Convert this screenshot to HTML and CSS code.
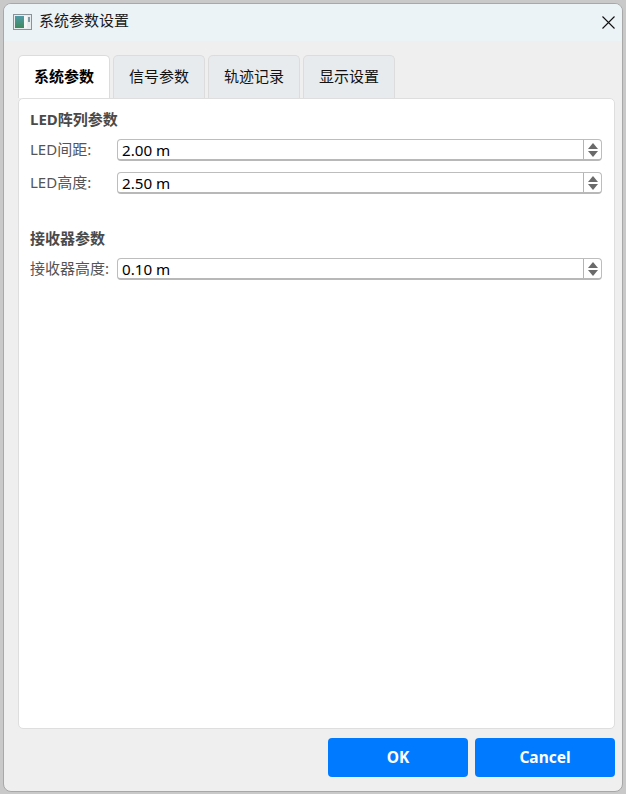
FILE: index.html
```html
<!DOCTYPE html>
<html lang="zh">
<head>
<meta charset="utf-8">
<title>系统参数设置</title>
<link rel="stylesheet" href="styles.css">
</head>
<body>
<div class="window">
  <header class="titlebar">
    <svg class="app-icon" width="19" height="16" viewBox="0 0 19 16">
      <defs><linearGradient id="g" x1="0" y1="0" x2="0" y2="1"><stop offset="0" stop-color="#4f9aa8"/><stop offset="1" stop-color="#3f8a5a"/></linearGradient></defs>
      <rect x="0.5" y="0.5" width="18" height="15" fill="#e8eef0" stroke="#8a9498"/>
      <rect x="2" y="2" width="9" height="12" fill="url(#g)"/>
      <rect x="11" y="2" width="3" height="12" fill="#f6f8f8"/>
      <rect x="15" y="3" width="2" height="5" fill="#7f9aa2"/>
    </svg>
    <span class="title">系统参数设置</span>
    <svg class="close" width="13" height="13" viewBox="0 0 13 13"><path d="M0.5 0.5L12.5 12.5M12.5 0.5L0.5 12.5" stroke="#111" stroke-width="1.1" fill="none"/></svg>
  </header>
  <div class="content">
    <nav class="tabs">
      <div class="tab active">系统参数</div>
      <div class="tab">信号参数</div>
      <div class="tab">轨迹记录</div>
      <div class="tab">显示设置</div>
    </nav>
    <section class="pane">
      <h2 class="group first">LED阵列参数</h2>
      <div class="row">
        <label class="label">LED间距:</label>
        <div class="spin"><span class="value">2.00 m</span><span class="arrows"><i class="up"></i><i class="down"></i></span></div>
      </div>
      <div class="row">
        <label class="label">LED高度:</label>
        <div class="spin"><span class="value">2.50 m</span><span class="arrows"><i class="up"></i><i class="down"></i></span></div>
      </div>
      <h2 class="group second">接收器参数</h2>
      <div class="row">
        <label class="label">接收器高度:</label>
        <div class="spin"><span class="value">0.10 m</span><span class="arrows"><i class="up"></i><i class="down"></i></span></div>
      </div>
    </section>
    <footer class="buttons">
      <button class="btn">OK</button>
      <button class="btn">Cancel</button>
    </footer>
  </div>
</div>
</body>
</html>
```
FILE: styles.css
```css
* { box-sizing: border-box; }
html, body { margin: 0; height: 100%; }
body {
  width: 626px;
  height: 794px;
  overflow: hidden;
  background: #c9c9c9;
  padding: 3px 3px 2px 3px;
  font-family: "Noto Sans", "Noto Sans CJK SC", sans-serif;
  font-size: 15px;
}
.window {
  width: 620px;
  height: 789px;
  background: #efefef;
  border: 1px solid #a8a8a8;
  border-radius: 8px;
  overflow: hidden;
  display: flex;
  flex-direction: column;
}
.titlebar {
  height: 37px;
  flex: none;
  background: #ebf3f7;
  display: flex;
  align-items: center;
  padding: 0 7px 0 9px;
}
.app-icon { flex: none; margin-right: 7px; margin-top: -1px; }
.title { flex: 1; font-size: 15px; line-height: 20px; margin-top: -5px; color: #1a1a1a; }
.close { flex: none; margin-top: -1px; }
.content {
  flex: 1;
  display: flex;
  flex-direction: column;
  padding: 14px 7px 14px 14px;
}
.tabs { display: flex; gap: 3px; height: 43px; flex: none; position: relative; z-index: 1; }
.tab {
  width: 92px;
  height: 43px;
  background: #e8ebee;
  border: 1px solid #dcdcdc;
  border-bottom: 0;
  border-radius: 5px 5px 0 0;
  display: flex;
  align-items: center;
  justify-content: center;
  padding-bottom: 3px;
  color: #111;
  font-size: 15px;
  line-height: 20px;
}
.tab.active { background: #fff; font-weight: 700; color: #000; }
.pane {
  height: 631px;
  flex: none;
  background: #fff;
  border: 1px solid #dedede;
  border-radius: 5px;
  padding: 0 12px 0 11px;
  display: flex;
  flex-direction: column;
}
.group {
  margin: 0;
  font-size: 15px;
  line-height: 20px;
  font-weight: 700;
  color: #4a4a4a;
}
.group.first { margin-top: 10px; margin-bottom: 10px; }
.group.second { margin-top: 23px; margin-bottom: 10px; }
.row { display: flex; align-items: center; height: 22px; margin-bottom: 11px; }
.label { width: 87px; flex: none; color: #555; font-size: 15px; line-height: 20px; margin-top: -3px; }
.spin {
  width: 485px;
  height: 22px;
  background: #fff;
  border: 1px solid #bdbdbd;
  border-bottom: 2px solid #b8b8b8;
  border-radius: 4px;
  display: flex;
  align-items: center;
  justify-content: space-between;
}
.value { padding-left: 4px; font-size: 15.2px; line-height: 20px; color: #000; }
.arrows {
  width: 18px;
  height: 100%;
  border-left: 1px solid #b4b4b4;
  display: flex;
  flex-direction: column;
  align-items: center;
  justify-content: center;
  gap: 2px;
}
.arrows i { display: block; width: 0; height: 0; border-left: 5px solid transparent; border-right: 5px solid transparent; }
.arrows .up { border-bottom: 6px solid #6a6a6a; }
.arrows .down { border-top: 6px solid #6a6a6a; }
.buttons { display: flex; justify-content: flex-end; gap: 7px; margin-top: 9px; }
.btn {
  width: 140px;
  height: 39px;
  padding: 0 0 2px;
  background: #007bff;
  border: 0;
  border-radius: 4px;
  color: #fff;
  font-family: "Noto Sans", sans-serif;
  font-size: 15.5px;
  font-weight: 700;
}
```
